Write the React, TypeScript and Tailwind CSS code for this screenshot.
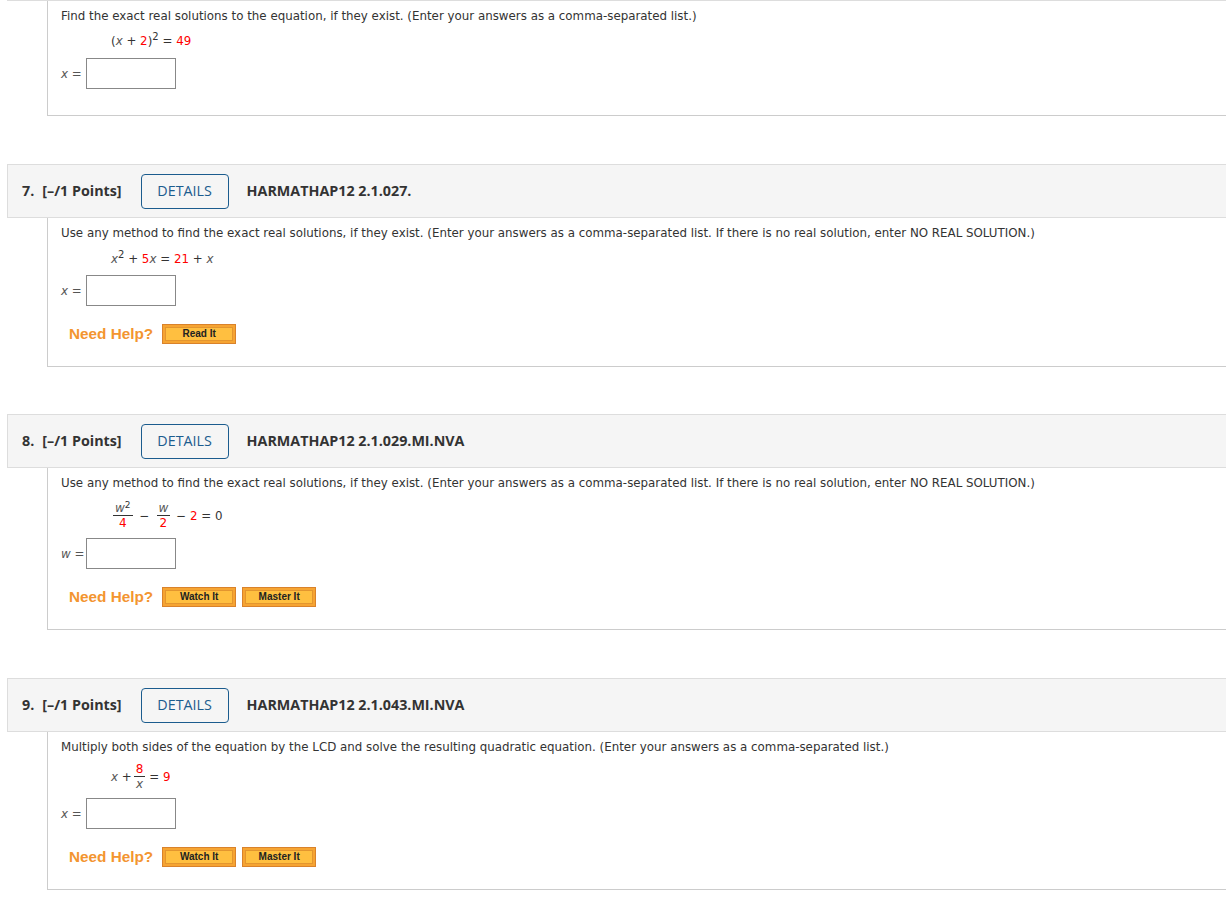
import React from "react";

const V = ({ children }: { children: React.ReactNode }) => (
  <span className="italic text-[#555]">{children}</span>
);
const R = ({ children }: { children: React.ReactNode }) => (
  <span className="text-[#ff0000]">{children}</span>
);

function Header({ num, code, mt }: { num: number; code: string; mt: string }) {
  return (
    <div className={`ml-[7px] ${mt} h-[54px] border border-r-0 border-[#dddddd] bg-[#f5f5f5] flex items-center font-['Open_Sans',sans-serif] text-[14.3px] text-[#333333]`}>
      <span className="ml-[14px] font-bold">{num}.</span>
      <span className="ml-[8px] font-bold">[–/1 Points]</span>
      <span className="ml-[19px] w-[88px] h-[35px] border-[1.5px] border-[#1b5c8e] rounded-[4px] flex items-center justify-center text-[#1b5c8e]">
        DETAILS
      </span>
      <span className="ml-[18px] font-bold">{code}</span>
    </div>
  );
}

function Answer({ v, mt }: { v: string; mt: string }) {
  return (
    <div className={`flex items-center ${mt}`}>
      <span className="w-[25px] text-[#555]">
        <span className="italic">{v}</span> =
      </span>
      <div className="w-[90px] h-[31px] border border-[#888888] bg-white" />
    </div>
  );
}

function Btn({ label }: { label: string }) {
  return (
    <div className="w-[74px] h-[20px] border border-[#d9822b] bg-[#f6a432] p-[2px]">
      <div className="w-full h-full border border-[#e3952f] bg-[#ffbf40] flex items-center justify-center font-['Liberation_Sans',Arial,sans-serif] font-bold text-[10px] text-[#222]">
        {label}
      </div>
    </div>
  );
}

function Help({ buttons, mt }: { buttons: string[]; mt: string }) {
  return (
    <div className={`flex items-center h-[20px] ml-[8px] ${mt}`}>
      <span className="font-['Liberation_Sans',Arial,sans-serif] font-bold text-[15.3px] text-[#f39530]">
        Need Help?
      </span>
      <div className="flex gap-[6px] ml-[9px]">
        {buttons.map((b) => (
          <Btn key={b} label={b} />
        ))}
      </div>
    </div>
  );
}

function Frac({ n, d }: { n: React.ReactNode; d: React.ReactNode }) {
  return (
    <span className="inline-flex flex-col items-center text-[12px] leading-[13px] mx-[2px]">
      <span className="px-[2px]">{n}</span>
      <span className="h-px w-full bg-[#333]" />
      <span className="px-[2px] pt-[1px]">{d}</span>
    </span>
  );
}

export default function App() {
  return (
    <div className="w-[1226px] h-[918px] bg-white overflow-hidden font-['DejaVu_Sans',Verdana,sans-serif] text-[11.85px] leading-[16px] text-[#333333]">
      <div className="ml-[7px] h-[1px] bg-[#dddddd]" />
      {/* previous question body */}
      <div className="ml-[47px] border-l border-b border-[#cccccc] pl-[13px] pt-[7px] pb-[26px]">
        <div>Find the exact real solutions to the equation, if they exist. (Enter your answers as a comma-separated list.)</div>
        <div className="ml-[50px] mt-[9px]">
          (<V>x</V> + <R>2</R>)<sup className="text-[10px]">2</sup> = <R>49</R>
        </div>
        <Answer v="x" mt="mt-[9px]" />
      </div>

      <Header num={7} code="HARMATHAP12 2.1.027." mt="mt-[48px]" />
      <div className="ml-[47px] border-l border-b border-[#cccccc] pl-[13px] pt-[7px] pb-[22px]">
        <div>Use any method to find the exact real solutions, if they exist. (Enter your answers as a comma-separated list. If there is no real solution, enter NO REAL SOLUTION.)</div>
        <div className="ml-[50px] mt-[10px]">
          <V>x</V>
          <sup className="text-[10px]">2</sup> + <R>5</R>
          <V>x</V> = <R>21</R> + <V>x</V>
        </div>
        <Answer v="x" mt="mt-[8px]" />
        <Help buttons={["Read It"]} mt="mt-[18px]" />
      </div>

      <Header num={8} code="HARMATHAP12 2.1.029.MI.NVA" mt="mt-[47px]" />
      <div className="ml-[47px] border-l border-b border-[#cccccc] pl-[13px] pt-[7px] pb-[22px]">
        <div>Use any method to find the exact real solutions, if they exist. (Enter your answers as a comma-separated list. If there is no real solution, enter NO REAL SOLUTION.)</div>
        <div className="ml-[50px] mt-[10px] flex items-center h-[30px]">
          <Frac
            n={
              <>
                <V>w</V>
                <sup className="text-[9px]">2</sup>
              </>
            }
            d={<R>4</R>}
          />
          <span className="mx-[5px]">−</span>
          <Frac n={<V>w</V>} d={<R>2</R>} />
          <span className="ml-[4px]">
            − <R>2</R> = 0
          </span>
        </div>
        <Answer v="w" mt="mt-[7px]" />
        <Help buttons={["Watch It", "Master It"]} mt="mt-[18px]" />
      </div>

      <Header num={9} code="HARMATHAP12 2.1.043.MI.NVA" mt="mt-[48px]" />
      <div className="ml-[47px] border-l border-b border-[#cccccc] pl-[13px] pt-[7px] pb-[22px]">
        <div>Multiply both sides of the equation by the LCD and solve the resulting quadratic equation. (Enter your answers as a comma-separated list.)</div>
        <div className="ml-[50px] mt-[8px] flex items-center h-[28px]">
          <span>
            <V>x</V> +
          </span>
          <Frac n={<R>8</R>} d={<V>x</V>} />
          <span className="ml-[2px]">
            = <R>9</R>
          </span>
        </div>
        <Answer v="x" mt="mt-[7px]" />
        <Help buttons={["Watch It", "Master It"]} mt="mt-[18px]" />
      </div>
    </div>
  );
}
